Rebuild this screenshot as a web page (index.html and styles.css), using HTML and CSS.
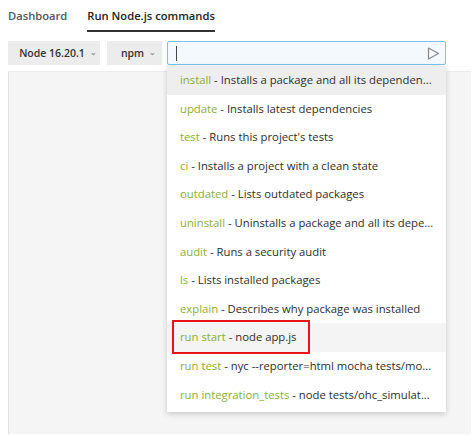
FILE: index.html
```html
<!DOCTYPE html>
<html lang="en">
<head>
    <meta charset="UTF-8">
    <meta name="viewport" content="width=device-width, initial-scale=1.0">
    <title>Run Node.js commands</title>
    <link rel="stylesheet" href="styles.css">
</head>
<body>
    <div class="tabs">
        <div class="tab">Dashboard</div>
        <div class="tab active">Run Node.js commands</div>
    </div>

    <div class="toolbar">
        <button class="select-btn node-btn">Node 16.20.1 <span class="chev">⌄</span></button>
        <button class="select-btn npm-btn">npm <span class="chev">⌄</span></button>
        <div class="cmd-wrap">
            <div class="cmd-input">
                <span class="caret"></span>
                <svg class="run-icon" width="13" height="13" viewBox="0 0 13 13">
                    <path d="M1.5 1 L11.5 6.5 L1.5 12 Z" fill="none" stroke="#8a8a8a" stroke-width="1.2" stroke-linejoin="round"/>
                </svg>
            </div>
            <ul class="dropdown">
                <li class="hover"><b>install</b> - Installs a package and all its dependen...</li>
                <li><b>update</b> - Installs latest dependencies</li>
                <li><b>test</b> - Runs this project's tests</li>
                <li><b>ci</b> - Installs a project with a clean state</li>
                <li><b>outdated</b> - Lists outdated packages</li>
                <li><b>uninstall</b> - Uninstalls a package and all its depe...</li>
                <li><b>audit</b> - Runs a security audit</li>
                <li><b>ls</b> - Lists installed packages</li>
                <li><b>explain</b> - Describes why package was installed</li>
                <li class="marked"><span class="mark-box"></span><b>run start</b> - node app.js</li>
                <li><b>run test</b> - nyc --reporter=html mocha tests/mo...</li>
                <li><b>run integration_tests</b> - node tests/ohc_simulat...</li>
            </ul>
        </div>
    </div>

    <div class="panel"></div>
</body>
</html>
```

FILE: styles.css
```css
body {
    margin: 0;
    padding: 0 3px 0 8px;
    font-family: 'Open Sans', sans-serif;
    font-size: 11.3px;
    color: #2e2e2e;
    background: white;
}

.tabs {
    display: flex;
    gap: 20px;
    height: 32px;
    align-items: flex-start;
}

.tab {
    padding-top: 8px;
    height: 22px;
    font-size: 11.2px;
    color: #555;
    font-weight: 600;
}

.tab.active {
    color: #222;
    border-bottom: 2px solid #333;
}

.toolbar {
    display: flex;
    align-items: flex-start;
    margin-top: 9px;
    height: 24px;
}

.select-btn {
    height: 24px;
    border: none;
    background: #ececec;
    font-family: 'Open Sans', sans-serif;
    font-size: 10.5px;
    font-weight: 600;
    color: #333;
    padding: 0 0 0 8px;
    display: flex;
    align-items: center;
    justify-content: center;
    gap: 5px;
}

.node-btn {
    width: 92px;
    margin-right: 7px;
}

.npm-btn {
    width: 55px;
    margin-right: 5px;
}

.chev {
    font-size: 8px;
    color: #999;
    position: relative;
    top: -2px;
}

.cmd-wrap {
    position: relative;
    width: 279px;
    z-index: 2;
}

.cmd-input {
    height: 22px;
    border: 1px solid #7ec0e6;
    border-radius: 2px;
    background: #f3f9fd;
    display: flex;
    align-items: center;
    justify-content: space-between;
    padding: 0 5px 0 8px;
}

.caret {
    width: 1px;
    height: 15px;
    background: #444;
}

.run-icon {
    display: block;
}

.dropdown {
    list-style: none;
    margin: 1px 0 0 0;
    padding: 0 0 3px 0;
    background: white;
    box-shadow: 0 2px 6px rgba(0, 0, 0, 0.18);
}

.dropdown li {
    position: relative;
    height: 28.6px;
    line-height: 28.6px;
    padding-left: 13px;
    white-space: nowrap;
    overflow: hidden;
}

.dropdown li b {
    font-weight: normal;
    color: #89ae38;
}

.dropdown li.hover {
    background: #eeeeee;
}

.dropdown li.marked {
    background: #f4f4f4;
    overflow: visible;
}

.mark-box {
    position: absolute;
    left: 5px;
    top: -3px;
    width: 134px;
    height: 30px;
    border: 2px solid #e8141c;
}

.panel {
    margin-top: 6px;
    height: 362px;
    background: #f5f5f5;
    border-left: 1px solid #e2e2e2;
    border-top: 1px solid #ececec;
}
```
